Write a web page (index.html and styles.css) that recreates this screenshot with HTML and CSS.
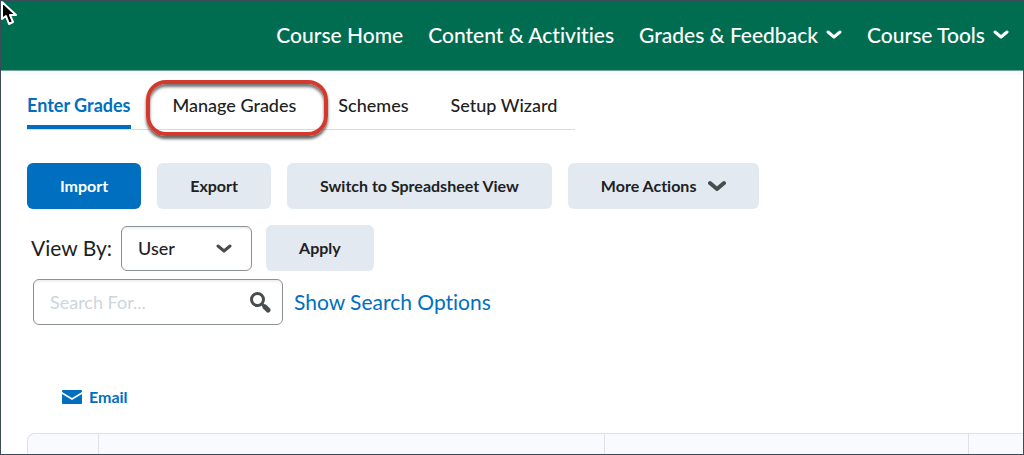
FILE: index.html
```
<!DOCTYPE html>
<html lang="en">
<head>
    <meta charset="UTF-8">
    <title>Grades</title>
    <link rel="stylesheet" href="styles.css">
</head>
<body>
<div class="page">
    <header class="navbar">
        <nav class="nav">
            <a href="#">Course Home</a>
            <a href="#">Content &amp; Activities</a>
            <button type="button">Grades &amp; Feedback
                <svg width="16" height="12" viewBox="0 0 16 12"><path d="M2 4l6 5 6-5"/></svg>
            </button>
            <button type="button">Course Tools
                <svg width="16" height="12" viewBox="0 0 16 12"><path d="M2 4l6 5 6-5"/></svg>
            </button>
        </nav>
    </header>

    <main class="content">
        <nav class="tabs">
            <a class="active" href="#">Enter Grades</a>
            <a class="marked" href="#">Manage Grades</a>
            <a href="#">Schemes</a>
            <a href="#">Setup Wizard</a>
        </nav>

        <div class="actions">
            <button class="btn primary" type="button">Import</button>
            <button class="btn" type="button">Export</button>
            <button class="btn" type="button">Switch to Spreadsheet View</button>
            <button class="btn" type="button">More Actions
                <svg width="18" height="12" viewBox="0 0 18 12"><path d="M2 4l7 6 7-6"/></svg>
            </button>
        </div>

        <form class="view">
            <label for="view-by">View By:</label>
            <div class="select">
                <select id="view-by">
                    <option>User</option>
                    <option>Group</option>
                </select>
                <svg width="16" height="10" viewBox="0 0 16 10"><path d="M2 2l6 5 6-5"/></svg>
            </div>
            <button class="btn" type="button">Apply</button>
        </form>

        <form class="search">
            <div class="search-box">
                <input type="text" placeholder="Search For..." aria-label="Search For">
                <button type="button" aria-label="Search">
                    <svg width="22" height="22" viewBox="0 0 22 22">
                        <circle cx="8.500" cy="8.500" r="6"/>
                        <path class="stem" d="M13 13l3 3"/>
                        <path class="handle" d="M16 16l3 3"/>
                    </svg>
                </button>
            </div>
            <a href="#">Show Search Options</a>
        </form>

        <a class="email" href="#">
            <svg width="20" height="14" viewBox="0 0 20 14">
                <path d="M1 0h18a1 1 0 0 1 1 1v1l-10 6L0 2V1a1 1 0 0 1 1-1z"/>
                <path d="M0 4l10 6 10-6v9a1 1 0 0 1-1 1H1a1 1 0 0 1-1-1z"/>
            </svg>
            Email
        </a>

        <table class="grades">
            <thead>
                <tr>
                    <th class="col-check"></th>
                    <th class="col-name"></th>
                    <th class="col-grade"></th>
                    <th></th>
                </tr>
            </thead>
        </table>
    </main>
</div>

<svg class="cursor" width="20" height="28" viewBox="0 0 20 28">
    <path d="M2 2v17l4-3 3 8 4-2-3-7h6z"/>
</svg>
</body>
</html>
```
FILE: styles.css
```
* {
    box-sizing: border-box;
}
body {
    margin: 0;
    font-family: Lato, "Liberation Sans", sans-serif;
    font-variant-ligatures: none;
    color: #202122;
    background: #fff;
}
a {
    color: #006fbf;
    text-decoration: none;
}
button, input, select {
    font-family: inherit;
    font-variant-ligatures: inherit;
    color: inherit;
    margin: 0;
}
svg {
    fill: none;
    stroke: #494c4e;
    stroke-width: 3;
    stroke-linecap: round;
    stroke-linejoin: round;
}
.page {
    height: 100vh;
    overflow: hidden;
    border: 1px solid #3c4a5a;
}

/* top bar */
.navbar {
    height: 70px;
    background: #006d50;
    border-bottom: 1px solid #6fa898;
    box-shadow: 0 4px 0 #fafafc;
    padding: 0 14px;
}
.nav {
    display: flex;
    justify-content: flex-end;
    align-items: center;
    gap: 25px;
    height: 66px;
}
.nav a, .nav button {
    display: flex;
    align-items: center;
    gap: 8px;
    padding: 0;
    border: 0;
    background: none;
    color: #fff;
    font-size: 21px;
    font-weight: 500;
}
.nav svg {
    stroke: #fff;
}

.content {
    padding: 12px 0 0 26px;
}

/* tabs */
.tabs {
    display: flex;
    width: max-content;
    gap: 42px;
    padding-right: 18px;
    border-bottom: 1px solid #d3dde3;
}
.tabs a {
    position: relative;
    height: 46px;
    line-height: 45px;
    font-size: 18px;
    font-weight: 500;
    color: #202122;
}
.tabs .active {
    color: #006fbf;
    font-weight: 700;
    border-bottom: 4px solid #006fbf;
}
.tabs .marked::after {
    content: "";
    position: absolute;
    top: -3px;
    bottom: -7px;
    left: -27px;
    right: -32px;
    border: 4px solid #d23a2e;
    border-radius: 20px;
    box-shadow: 0 3px 3px #666, inset 0 3px 3px #777;
}

/* buttons */
.actions {
    display: flex;
    gap: 16px;
    margin-top: 33px;
}
.btn {
    display: flex;
    align-items: center;
    gap: 12px;
    height: 46px;
    padding: 0 33px 2px;
    border: 0;
    border-radius: 6px;
    background: #e3e9f1;
    font-size: 16px;
    font-weight: 700;
}
.btn.primary {
    background: #006fbf;
    color: #fff;
}
.btn svg {
    stroke-width: 4;
}

/* filters */
.view {
    display: flex;
    align-items: center;
    margin-top: 16px;
    padding-left: 4px;
    font-size: 21px;
}
.view label {
    padding-bottom: 2px;
}
.select {
    position: relative;
    margin: 0 14px 0 9px;
}
.select select {
    appearance: none;
    display: block;
    width: 131px;
    height: 45px;
    padding: 0 16px;
    border: 1px solid #8c9196;
    border-radius: 6px;
    background: #fff;
    box-shadow: inset 0 2px 2px #f0f1f2;
    font-size: 18px;
    font-weight: 500;
}
.select svg {
    position: absolute;
    top: 18px;
    right: 20px;
    pointer-events: none;
}
.search {
    display: flex;
    align-items: center;
    gap: 11px;
    margin-top: 8px;
    padding-left: 6px;
    font-size: 21px;
}
.search > a {
    padding-bottom: 2px;
}
.search-box {
    display: flex;
    align-items: center;
    width: 250px;
    height: 46px;
    padding: 0 11px 0 16px;
    border: 1px solid #8c9196;
    border-radius: 6px;
    box-shadow: inset 0 2px 2px #f0f1f2;
}
.search-box input {
    flex: 1;
    min-width: 0;
    padding: 0;
    border: 0;
    outline: none;
    background: none;
    font-size: 18px;
}
.search-box input::placeholder {
    color: #cdd5dc;
}
.search-box button {
    display: flex;
    padding: 0;
    border: 0;
    background: none;
}
.search-box .handle {
    stroke-width: 5;
}

.email {
    display: flex;
    align-items: center;
    gap: 7px;
    width: max-content;
    margin: 62px 0 0 35px;
    font-size: 16px;
    font-weight: 700;
}
.email svg {
    fill: #006fbf;
    stroke: none;
}

/* grades table */
.grades {
    width: 100%;
    margin-top: 27px;
    table-layout: fixed;
    border-collapse: separate;
    border-spacing: 0;
    border: 1px solid #dde1e8;
    border-width: 1px 0 0 1px;
    border-radius: 8px 0 0 0;
    background: #f9fafe;
}
.grades th {
    height: 60px;
    padding: 0;
    border-right: 1px solid #dde1e8;
}
.grades th:last-child {
    border-right: 0;
}
.col-check {
    width: 71px;
}
.col-name {
    width: 506px;
}
.col-grade {
    width: 364px;
}

.cursor {
    position: absolute;
    top: 0;
    left: 0;
    fill: #000;
    stroke: #fff;
    stroke-width: 2;
}
```
